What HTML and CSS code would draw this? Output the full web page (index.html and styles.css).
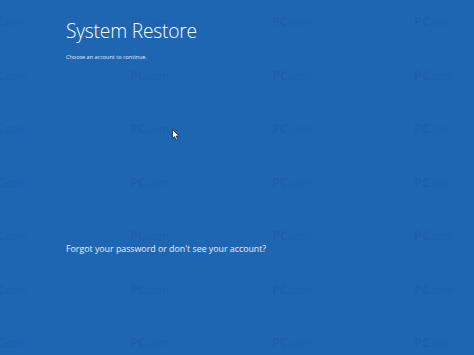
FILE: index.html
```html
<!DOCTYPE html>
<html lang="en">
<head>
    <meta charset="UTF-8">
    <title>System Restore</title>
    <link rel="stylesheet" href="styles.css">
</head>
<body>
    <div class="screen">
        <h1>System Restore</h1>
        <p class="hint">Choose an account to continue.</p>
        <a class="forgot" href="#">Forgot your password or don't see your account?</a>
    </div>
    <div class="marks" aria-hidden="true">
        <div class="marks-grid">
            <span>PC<i>.com</i></span><span>PC<i>.com</i></span><span>PC<i>.com</i></span><span>PC<i>.com</i></span>
            <span>PC<i>.com</i></span><span>PC<i>.com</i></span><span>PC<i>.com</i></span><span>PC<i>.com</i></span>
            <span>PC<i>.com</i></span><span>PC<i>.com</i></span><span>PC<i>.com</i></span><span>PC<i>.com</i></span>
            <span>PC<i>.com</i></span><span>PC<i>.com</i></span><span>PC<i>.com</i></span><span>PC<i>.com</i></span>
            <span>PC<i>.com</i></span><span>PC<i>.com</i></span><span>PC<i>.com</i></span><span>PC<i>.com</i></span>
            <span>PC<i>.com</i></span><span>PC<i>.com</i></span><span>PC<i>.com</i></span><span>PC<i>.com</i></span>
            <span>PC<i>.com</i></span><span>PC<i>.com</i></span><span>PC<i>.com</i></span><span>PC<i>.com</i></span>
        </div>
    </div>
    <svg class="cursor" width="8" height="12" viewBox="0 0 8 12">
        <path d="M0.5 0.5 L0.5 9.5 L2.6 7.6 L4.2 11 L5.6 10.4 L4.1 7.1 L7 7.1 Z" fill="#fff" stroke="#1a2a44" stroke-width="0.8"/>
    </svg>
</body>
</html>
```

FILE: styles.css
```css
html, body {
    margin: 0;
    height: 100%;
}
body {
    background-color: #1f66b2;
    font-family: "Open Sans", "Noto Sans", sans-serif;
    color: #fff;
    overflow: hidden;
    position: relative;
}
.screen {
    display: flex;
    flex-direction: column;
    align-items: flex-start;
    padding: 16px 0 0 66px;
}
h1 {
    margin: 0;
    font-size: 19.2px;
    font-weight: 300;
    letter-spacing: -0.2px;
    line-height: 30px;
}
.hint {
    margin: 7px 0 0 0;
    font-size: 5.5px;
    line-height: 8px;
    color: #e4edf8;
}
.forgot {
    margin-top: 181px;
    font-size: 8.8px;
    line-height: 14px;
    color: #e8eff8;
    text-decoration: none;
}
.marks {
    position: absolute;
    top: 0;
    left: 0;
    right: 0;
    bottom: 0;
    overflow: hidden;
    pointer-events: none;
}
.marks-grid {
    margin: 12px 0 0 -12px;
    display: grid;
    grid-template-columns: repeat(4, 142px);
    grid-auto-rows: 53.5px;
}
.marks span {
    font-size: 13px;
    font-weight: 700;
    color: rgba(20, 60, 130, 0.16);
    letter-spacing: -0.5px;
}
.marks span i {
    font-style: normal;
    font-weight: 400;
    font-size: 11px;
}
.cursor {
    position: absolute;
    left: 172px;
    top: 129px;
}
```
